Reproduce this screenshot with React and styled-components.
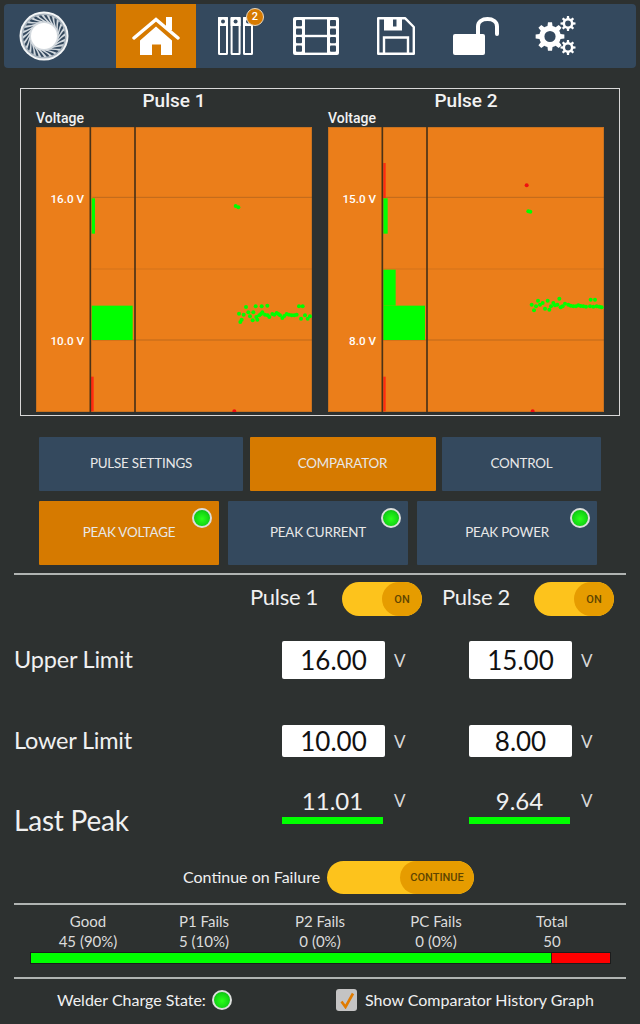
import React from "react";
import styled, { createGlobalStyle } from "styled-components";

const NAVY = "#34495e";
const AMBER = "#d67a00";
const GREEN = "#00ff00";
const RED = "#ff2a10";

const GlobalStyle = createGlobalStyle`
  html, body {
    margin: 0;
    padding: 0;
    background: #2d3130;
  }
  body {
    color: #f0f0f0;
    font-family: Lato, "Open Sans", sans-serif;
  }
  * {
    box-sizing: border-box;
  }
`;

const Page = styled.div`
  width: 640px;
  height: 1024px;
  overflow: hidden;
  display: flex;
  flex-direction: column;
`;

const Nav = styled.nav`
  height: 64px;
  margin: 4px 4px 0;
  display: flex;
  background: ${NAVY};
  border-radius: 4px;
  flex-shrink: 0;
`;

const LogoSlot = styled.div`
  width: 112px;
  display: flex;
  align-items: center;
  padding-left: 15px;
`;

const NavItem = styled.div`
  position: relative;
  width: 80px;
  display: flex;
  align-items: center;
  justify-content: center;
  background: ${({ $active }) => ($active ? AMBER : "transparent")};
`;

const Badge = styled.span`
  position: absolute;
  top: 4px;
  left: 50px;
  width: 18px;
  height: 18px;
  border-radius: 50%;
  background: ${AMBER};
  border: 1px solid #e8d8c0;
  color: #fff;
  font: 500 11px/16px Roboto, sans-serif;
  text-align: center;
`;

const ChartFrame = styled.section`
  margin: 20px 20px 0;
  height: 328px;
  border: 1px solid #d8d8d8;
  padding-left: 15px;
  display: flex;
  gap: 16px;
  flex-shrink: 0;
`;

const ChartPanel = styled.div`
  width: 276px;
  font-family: Roboto, sans-serif;
`;

const ChartTitle = styled.div`
  height: 24px;
  font-size: 19px;
  font-weight: 500;
  line-height: 24px;
  text-align: center;
  color: #f2f2f2;
`;

const AxisName = styled.div`
  height: 14px;
  margin-top: -2px;
  margin-bottom: 2px;
  font-size: 14px;
  font-weight: 500;
  line-height: 14px;
  color: #f2f2f2;
`;

const Plot = styled.svg`
  display: block;
  width: 276px;
  height: 285px;
`;

const TabRow = styled.div`
  display: flex;
  height: ${({ $h }) => $h}px;
  margin-top: ${({ $top }) => $top}px;
  margin-left: 39px;
  gap: ${({ $gap }) => $gap}px;
  flex-shrink: 0;
`;

const Tab = styled.div`
  position: relative;
  width: ${({ $w }) => $w}px;
  display: flex;
  align-items: center;
  justify-content: center;
  padding-bottom: 2px;
  background: ${({ $active }) => ($active ? AMBER : NAVY)};
  border-radius: 1px;
  color: #e8e8e8;
  font-size: 13.4px;
  letter-spacing: -0.2px;
  white-space: nowrap;
`;

const Led = styled.span`
  display: block;
  width: 20px;
  height: 20px;
  flex-shrink: 0;
  border-radius: 50%;
  border: 2px solid #dcdfdc;
  background: radial-gradient(circle at 50% 55%, #2cff1a 0%, #14d814 55%, #089a12 100%);
`;

const TabLed = styled(Led)`
  position: absolute;
  top: 7px;
  right: 7px;
`;

const Divider = styled.hr`
  height: 2px;
  margin: ${({ $top }) => $top}px 14px 0;
  border: 0;
  background: #b0b4b2;
  flex-shrink: 0;
`;

const ToggleRow = styled.div`
  display: grid;
  grid-template-columns: 92px 100px 92px 80px;
  align-items: center;
  height: 34px;
  margin-top: 7px;
  padding-left: 250px;
  font-size: 22px;
  letter-spacing: -0.3px;
  flex-shrink: 0;
`;

const ToggleName = styled.span`
  margin-bottom: 5px;
`;

const Toggle = styled.div`
  position: relative;
  width: ${({ $w }) => $w}px;
  height: ${({ $h }) => $h}px;
  border-radius: 17px;
  background: #fdc31c;
  overflow: hidden;
`;

const ToggleKnob = styled.span`
  position: absolute;
  top: 0;
  right: 0;
  bottom: 0;
  width: ${({ $w }) => $w}px;
  display: flex;
  align-items: center;
  justify-content: center;
  border-radius: 17px;
  background: #e69c00;
  color: #5f4500;
  font-size: 11px;
  font-weight: 500;
  letter-spacing: 0;
  font-family: Roboto, sans-serif;
`;

const LimitRow = styled.div`
  display: grid;
  grid-template-columns: 268px 103px 84px 103px 1fr;
  align-items: ${({ $align }) => $align || "center"};
  height: ${({ $h }) => ($h ? `${$h}px` : "auto")};
  margin-top: ${({ $top }) => $top}px;
  padding-left: 14px;
  flex-shrink: 0;
`;

const RowLabel = styled.div`
  font-size: ${({ $size }) => $size || 23.5}px;
  margin-bottom: 3px;
  letter-spacing: -0.2px;
  ${({ $offset }) => $offset && `margin-top: ${$offset}px; line-height: 34px; margin-bottom: 0;`}
`;

const Field = styled.div`
  height: 100%;
  display: flex;
  align-items: center;
  justify-content: center;
  background: #fff;
  border-radius: 2px;
  color: #111;
  font-size: 26px;
`;

const Unit = styled.div`
  padding-left: 9px;
  font-size: 17px;
  color: #d8d8d8;
  ${({ $top }) => $top && `padding-top: ${$top}px;`}
`;

const Reading = styled.div`
  border-bottom: 7px solid ${GREEN};
  height: 39px;
  margin-right: 2px;
  font-size: 24px;
  line-height: 32px;
  text-align: center;
`;

const ContinueRow = styled.div`
  display: flex;
  align-items: center;
  margin-top: 24px;
  padding-left: 183px;
  font-size: 16px;
  flex-shrink: 0;
`;

const ContinueLabel = styled.span`
  width: 144px;
  margin-bottom: 2px;
  white-space: nowrap;
`;

const Stats = styled.div`
  display: grid;
  grid-template-columns: repeat(5, 116px);
  margin: 6px 0 1px 30px;
  flex-shrink: 0;
`;

const Stat = styled.div`
  font-size: 15px;
  line-height: 20px;
  text-align: center;
  color: #dcdcdc;
`;

const Tally = styled.div`
  width: 581px;
  height: 12px;
  margin-left: 30px;
  display: flex;
  border: 1px solid #1c1c1c;
  flex-shrink: 0;
`;

const TallyPart = styled.div`
  width: ${({ $w }) => $w}px;
  flex-grow: ${({ $w }) => ($w ? 0 : 1)};
  background: ${({ $color }) => $color};
  & + & {
    border-left: 1px solid #3a1a10;
  }
`;

const Footer = styled.div`
  display: flex;
  align-items: center;
  height: 22px;
  margin-top: 10px;
  padding-left: 57px;
  font-size: 16px;
  white-space: nowrap;
  flex-shrink: 0;
`;

const ChargeLabel = styled.span`
  width: 155px;
  margin-bottom: 2px;
`;

const CheckGroup = styled.div`
  display: flex;
  align-items: center;
  gap: 8px;
  margin-left: 104px;
`;

const CheckText = styled.span`
  margin-bottom: 2px;
`;

const CheckBox = styled.span`
  width: 21px;
  height: 22px;
  display: flex;
  align-items: center;
  justify-content: center;
  border-radius: 3px;
  background: #c4c4c4;
`;

// teeth go around the hole, all in one path so the hole stays see-through
const gearPath = (cx, cy, outer, inner, hole, teeth) => {
  const step = (Math.PI * 2) / teeth;
  let d = "";
  for (let i = 0; i < teeth; i++) {
    const a = i * step;
    const pts = [
      [inner, a - step * 0.5],
      [inner, a - step * 0.3],
      [outer, a - step * 0.18],
      [outer, a + step * 0.18],
      [inner, a + step * 0.3],
    ];
    pts.forEach(([r, t], j) => {
      const x = (cx + Math.cos(t) * r).toFixed(2);
      const y = (cy + Math.sin(t) * r).toFixed(2);
      d += `${i === 0 && j === 0 ? "M" : "L"}${x} ${y} `;
    });
  }
  d += "Z ";
  d += `M${cx + hole} ${cy} A${hole} ${hole} 0 1 0 ${cx - hole} ${cy} A${hole} ${hole} 0 1 0 ${cx + hole} ${cy} Z`;
  return d;
};

const bladePath = (i, count) => {
  const a = (i / count) * Math.PI * 2;
  const at = (r, t) => `${(25 + Math.cos(t) * r).toFixed(2)} ${(25 + Math.sin(t) * r).toFixed(2)}`;
  return `M${at(21, a)} Q${at(18, a + 0.06)} ${at(14.5, a + 0.5)} Q${at(18.4, a + 0.22)} ${at(21, a + 0.13)} Z`;
};

const Logo = () => (
  <svg width="50" height="50" viewBox="0 0 50 50">
    <circle cx="25" cy="25" r="24.5" fill="#f4f6f7" />
    <circle cx="25" cy="25" r="22.6" fill="#a9b4be" />
    <circle cx="25" cy="25" r="21" fill="#d3d9de" />
    {Array.from({ length: 24 }, (_, i) => (
      <path key={i} d={bladePath(i, 24)} fill={NAVY} />
    ))}
    <circle cx="25" cy="25" r="13" fill="#fff" />
  </svg>
);

const HomeIcon = () => (
  <svg width="48" height="40" viewBox="0 0 48 40" fill="#fff">
    <path d="M2 22 24 3.5 46 22" fill="none" stroke="#fff" strokeWidth="3.4" strokeLinecap="round" strokeLinejoin="miter" />
    <rect x="34" y="1" width="6" height="13" />
    <path d="M8 24.5 24 10.5 40 24.5V39H29V28.5H20V39H8Z" />
  </svg>
);

const BinsIcon = () => (
  <svg width="36" height="38" viewBox="0 0 36 38">
    {[0, 12.6, 25].map((x) => (
      <g key={x}>
        <rect x={x + 1} y="1" width="8" height="36" fill="none" stroke="#fff" strokeWidth="2" rx="0.5" />
        <rect x={x} y="0" width="10" height="9" fill="#fff" rx="0.5" />
        <circle cx={x + 5} cy="4.4" r="2" fill={NAVY} />
      </g>
    ))}
  </svg>
);

const FilmIcon = () => (
  <svg width="46" height="38" viewBox="0 0 46 38">
    <rect x="0" y="0" width="46" height="38" rx="2" fill="#fff" />
    {[3, 11.5, 20, 28.5].map((y) => (
      <g key={y} fill={NAVY}>
        <rect x="3" y={y} width="6" height="6.2" rx="1" />
        <rect x="37" y={y} width="6" height="6.2" rx="1" />
      </g>
    ))}
    <rect x="12" y="2.4" width="22" height="15.4" fill={NAVY} />
    <rect x="12" y="20.2" width="22" height="15.4" fill={NAVY} />
  </svg>
);

const FloppyIcon = () => (
  <svg width="38" height="38" viewBox="0 0 38 38" fill="none" stroke="#fff">
    <path d="M1.2 1.2H28L36.8 10V36.8H1.2Z" strokeWidth="2.4" strokeLinejoin="round" />
    <path d="M7 1V13.5H25V1H19.5V9.5H16V1Z" fill="#fff" stroke="none" />
    <path d="M7 36.5V20.5H31V36.5" strokeWidth="2.4" />
  </svg>
);

const UnlockIcon = () => (
  <svg width="46" height="38" viewBox="0 0 46 38">
    <rect x="0" y="17" width="32" height="21" rx="2" fill="#fff" />
    <path d="M25 18V9.5C25 5 29 2 34.5 2S44 5 44 9.5V17" fill="none" stroke="#fff" strokeWidth="4" strokeLinecap="round" />
  </svg>
);

const GearsIcon = () => (
  <svg width="42" height="40" viewBox="0 0 42 40" fill="#fff" fillRule="evenodd">
    <path d={gearPath(15, 20.5, 14.5, 10.8, 5.6, 8)} />
    <path d={gearPath(33, 7.5, 7.6, 5.4, 2.9, 8)} />
    <path d={gearPath(33, 31.5, 7.6, 5.4, 2.9, 8)} />
  </svg>
);

const SCATTER_1 = [
  [672, 687], [686, 690], [693, 667], [680, 705], [676, 712], [700, 683], [705, 695], [715, 683],
  [722, 665], [713, 707], [727, 705], [733, 692], [740, 665], [742, 683], [750, 690], [757, 663],
  [763, 697], [772, 688], [785, 685], [795, 692], [802, 700], [815, 688], [830, 692], [845, 690],
  [852, 665], [863, 665], [858, 702], [870, 692], [878, 702], [885, 695], [724, 697], [738, 688],
  [758, 692], [778, 690], [790, 688], [808, 694], [822, 690], [838, 692],
];

const SCATTER_2 = [
  [635, 660], [642, 677], [654, 648], [648, 665], [660, 660], [668, 655], [675, 672], [683, 648],
  [688, 675], [693, 665], [700, 655], [705, 662], [718, 642], [722, 668], [735, 657], [745, 660],
  [760, 665], [775, 662], [790, 665], [812, 645], [825, 645], [810, 665], [830, 665], [845, 668],
  [712, 660], [728, 665], [752, 663], [768, 665], [782, 664], [798, 666], [820, 666], [838, 666],
];

const CHARTS = [
  {
    title: "Pulse 1",
    originX: 63,
    rails: [226, 360],
    labels: [["16.0 V", 343], ["10.0 V", 770]],
    labelX: 207,
    greens: [[230, 341, 10, 106], [230, 663, 123, 103]],
    reds: [[228, 876, 8, 104]],
    redDots: [[658, 980]],
    dots: [[662, 364], [670, 368], ...SCATTER_1],
    gridFrom: 232,
  },
  {
    title: "Pulse 2",
    originX: 24,
    rails: [187, 321],
    labels: [["15.0 V", 343], ["8.0 V", 770]],
    labelX: 168,
    greens: [[190, 341, 13, 106], [190, 555, 37, 108], [190, 663, 125, 103]],
    reds: [[190, 235, 7, 105], [190, 876, 7, 104]],
    redDots: [[620, 302], [638, 980]],
    dots: [[625, 380], [631, 381], ...SCATTER_2],
    gridFrom: 190,
  },
];

const Chart = ({ chart }) => {
  const right = chart.originX + 828;
  return (
    <ChartPanel>
      <ChartTitle>{chart.title}</ChartTitle>
      <AxisName>Voltage</AxisName>
      <Plot viewBox={`${chart.originX} 127 828 855`}>
        <rect x={chart.originX} y="127" width="828" height="855" fill="#eb7e1a" />
        <rect x={chart.originX + 1.5} y="128.5" width="825" height="852" fill="none" stroke="#c9721f" strokeWidth="3" />
        {[[338, 0.28], [553, 0.14], [766, 0.28]].map(([y, opacity]) => (
          <line key={y} x1={chart.gridFrom} x2={right} y1={y} y2={y} stroke="#4a3520" strokeWidth="3" opacity={opacity} />
        ))}
        {chart.greens.map(([x, y, w, h]) => (
          <rect key={y} x={x} y={y} width={w} height={h} fill={GREEN} />
        ))}
        {chart.reds.map(([x, y, w, h]) => (
          <rect key={y} x={x} y={y} width={w} height={h} fill={RED} />
        ))}
        {chart.rails.map((x) => (
          <line key={x} x1={x} x2={x} y1="127" y2="982" stroke="#4a3217" strokeWidth="5" />
        ))}
        {chart.dots.map(([x, y], i) => (
          <circle key={i} cx={x} cy={y} r="6" fill={GREEN} />
        ))}
        {chart.redDots.map(([x, y]) => (
          <circle key={x} cx={x} cy={y} r="6" fill="#f01010" />
        ))}
        {chart.labels.map(([text, y]) => (
          <text key={text} x={chart.labelX} y={y + 12} textAnchor="end" fill="#fff" fontSize="35" fontWeight="500" fontFamily="Roboto, sans-serif">
            {text}
          </text>
        ))}
      </Plot>
    </ChartPanel>
  );
};

const STATS = [
  ["Good", "45 (90%)"],
  ["P1 Fails", "5 (10%)"],
  ["P2 Fails", "0 (0%)"],
  ["PC Fails", "0 (0%)"],
  ["Total", "50"],
];

const App = () => (
  <Page>
    <GlobalStyle />
    <Nav>
      <LogoSlot>
        <Logo />
      </LogoSlot>
      <NavItem $active>
        <HomeIcon />
      </NavItem>
      <NavItem>
        <BinsIcon />
        <Badge>2</Badge>
      </NavItem>
      <NavItem>
        <FilmIcon />
      </NavItem>
      <NavItem>
        <FloppyIcon />
      </NavItem>
      <NavItem>
        <UnlockIcon />
      </NavItem>
      <NavItem>
        <GearsIcon />
      </NavItem>
    </Nav>

    <ChartFrame>
      {CHARTS.map((chart) => (
        <Chart key={chart.title} chart={chart} />
      ))}
    </ChartFrame>

    <TabRow $h={54} $top={21} $gap={6.5}>
      <Tab $w={204}>PULSE SETTINGS</Tab>
      <Tab $w={186} $active>COMPARATOR</Tab>
      <Tab $w={159}>CONTROL</Tab>
    </TabRow>
    <TabRow $h={64} $top={10} $gap={9}>
      <Tab $w={180} $active>PEAK VOLTAGE<TabLed /></Tab>
      <Tab $w={180}>PEAK CURRENT<TabLed /></Tab>
      <Tab $w={180}>PEAK POWER<TabLed /></Tab>
    </TabRow>

    <Divider $top={8} />

    <ToggleRow>
      <ToggleName>Pulse 1</ToggleName>
      <Toggle $w={80} $h={34}>
        <ToggleKnob $w={40}>ON</ToggleKnob>
      </Toggle>
      <ToggleName>Pulse 2</ToggleName>
      <Toggle $w={80} $h={34}>
        <ToggleKnob $w={40}>ON</ToggleKnob>
      </Toggle>
    </ToggleRow>

    <LimitRow $h={38} $top={25}>
      <RowLabel>Upper Limit</RowLabel>
      <Field>16.00</Field>
      <Unit>V</Unit>
      <Field>15.00</Field>
      <Unit>V</Unit>
    </LimitRow>
    <LimitRow $h={32} $top={46}>
      <RowLabel>Lower Limit</RowLabel>
      <Field>10.00</Field>
      <Unit>V</Unit>
      <Field>8.00</Field>
      <Unit>V</Unit>
    </LimitRow>
    <LimitRow $top={28} $align="start">
      <RowLabel $size={28} $offset={18}>Last Peak</RowLabel>
      <Reading>11.01</Reading>
      <Unit $top={5}>V</Unit>
      <Reading>9.64</Reading>
      <Unit $top={5}>V</Unit>
    </LimitRow>

    <ContinueRow>
      <ContinueLabel>Continue on Failure</ContinueLabel>
      <Toggle $w={147} $h={33}>
        <ToggleKnob $w={74}>CONTINUE</ToggleKnob>
      </Toggle>
    </ContinueRow>

    <Divider $top={9} />

    <Stats>
      {STATS.map(([name, value]) => (
        <Stat key={name}>
          {name}
          <br />
          {value}
        </Stat>
      ))}
    </Stats>
    <Tally>
      <TallyPart $w={520} $color={GREEN} />
      <TallyPart $color="#ff0000" />
    </Tally>

    <Divider $top={13} />

    <Footer>
      <ChargeLabel>Welder Charge State:</ChargeLabel>
      <Led />
      <CheckGroup>
        <CheckBox>
          <svg width="16" height="17" viewBox="0 0 16 17" fill="none">
            <path d="M2.5 9.5 6.5 15 14 1.5" stroke="#e07b00" strokeWidth="2.6" />
          </svg>
        </CheckBox>
        <CheckText>Show Comparator History Graph</CheckText>
      </CheckGroup>
    </Footer>
  </Page>
);

export default App;
